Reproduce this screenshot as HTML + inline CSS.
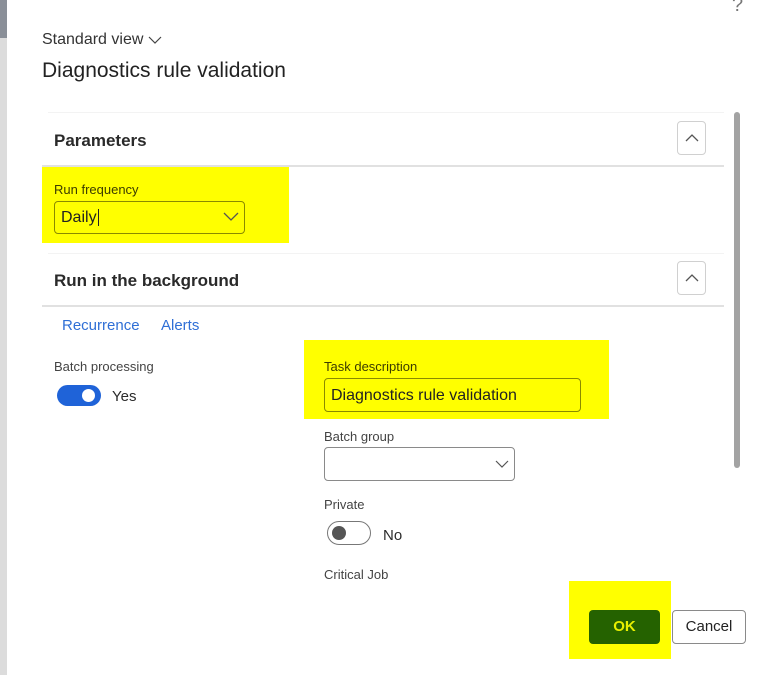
<!DOCTYPE html>
<html><head><meta charset="utf-8"><style>
*{margin:0;padding:0;box-sizing:border-box}
body{width:768px;height:675px;background:#fff;position:relative;overflow:hidden;font-family:"Liberation Sans",sans-serif;color:#2b2b2b}
.a{position:absolute;white-space:nowrap}
.lbl{font-size:13px;color:#444}
.y{background:#ffff00;position:absolute}
.btn{position:absolute;border:1px solid #d0d0d0;border-radius:4px;background:#fff}
.line{position:absolute;height:2px;background:#e1e1e1}
</style></head><body>
<div class="a" style="left:0;top:0;width:7px;height:675px;background:#dcdcdc"></div>
<div class="a" style="left:0;top:0;width:7px;height:38px;background:#8a8f98"></div>
<div class="a" style="left:732px;top:-6px;font-size:20px;color:#777">?</div>

<div class="a" style="left:42px;top:31px;font-size:16px;color:#333">Standard view</div>
<svg class="a" style="left:148px;top:35px" width="14" height="10"><path d="M1 2 L7 8 L13 2" fill="none" stroke="#444" stroke-width="1.2"/></svg>
<div class="a" style="left:42px;top:59px;font-size:21px;color:#222">Diagnostics rule validation</div>

<div class="a" style="left:48px;top:112px;width:676px;height:1px;background:#f3f3f3"></div>
<div class="a" style="left:54px;top:131px;font-size:17px;font-weight:bold;color:#2a2a2a">Parameters</div>
<div class="btn" style="left:677px;top:121px;width:29px;height:34px"></div>
<svg class="a" style="left:684px;top:133px" width="16" height="10"><path d="M2 8 L8 2 L14 8" fill="none" stroke="#555" stroke-width="1.3"/></svg>
<div class="line" style="left:42px;top:165px;width:682px"></div>

<div class="y" style="left:42px;top:167px;width:247px;height:76px"></div>
<div class="a lbl" style="left:54px;top:182px;color:#3c3c00">Run frequency</div>
<div class="a" style="left:54px;top:201px;width:191px;height:33px;border:1px solid #8a8a00;border-radius:4px"></div>
<div class="a" style="left:61px;top:209px;font-size:16px;color:#222">Daily<span style="border-left:1px solid #222;margin-left:1px"></span></div>
<svg class="a" style="left:223px;top:212px" width="16" height="10"><path d="M1 1 L8 8 L15 1" fill="none" stroke="#555" stroke-width="1.3"/></svg>

<div class="a" style="left:48px;top:253px;width:676px;height:1px;background:#f3f3f3"></div>
<div class="a" style="left:54px;top:271px;font-size:17px;font-weight:bold;color:#2a2a2a">Run in the background</div>
<div class="btn" style="left:677px;top:261px;width:29px;height:34px"></div>
<svg class="a" style="left:684px;top:273px" width="16" height="10"><path d="M2 8 L8 2 L14 8" fill="none" stroke="#555" stroke-width="1.3"/></svg>
<div class="line" style="left:42px;top:305px;width:682px"></div>

<div class="a" style="left:62px;top:317px;font-size:15px;color:#2f6fd6">Recurrence</div>
<div class="a" style="left:161px;top:317px;font-size:15px;color:#2f6fd6">Alerts</div>

<div class="a lbl" style="left:54px;top:359px">Batch processing</div>
<div class="a" style="left:57px;top:385px;width:44px;height:21px;border-radius:11px;background:#1f63d8"></div>
<div class="a" style="left:82px;top:389px;width:13px;height:13px;border-radius:50%;background:#fff"></div>
<div class="a" style="left:112px;top:388px;font-size:15px">Yes</div>

<div class="y" style="left:304px;top:340px;width:305px;height:79px"></div>
<div class="a lbl" style="left:324px;top:359px;color:#3c3c00">Task description</div>
<div class="a" style="left:324px;top:378px;width:257px;height:34px;border:1px solid #8a8a00;border-radius:4px"></div>
<div class="a" style="left:331px;top:387px;font-size:16px;color:#222">Diagnostics rule validation</div>

<div class="a lbl" style="left:324px;top:429px">Batch group</div>
<div class="a" style="left:324px;top:447px;width:191px;height:34px;border:1px solid #8a8a8a;border-radius:4px"></div>
<svg class="a" style="left:495px;top:460px" width="14" height="9"><path d="M1 1 L7 7 L13 1" fill="none" stroke="#555" stroke-width="1.2"/></svg>

<div class="a lbl" style="left:324px;top:497px">Private</div>
<div class="a" style="left:327px;top:521px;width:44px;height:24px;border-radius:12px;border:1px solid #777"></div>
<div class="a" style="left:332px;top:526px;width:14px;height:14px;border-radius:50%;background:#555"></div>
<div class="a" style="left:383px;top:527px;font-size:15px">No</div>

<div class="a lbl" style="left:324px;top:567px">Critical Job</div>

<div class="a" style="left:734px;top:112px;width:6px;height:356px;border-radius:3px;background:#a3a3a3"></div>

<div class="y" style="left:569px;top:581px;width:102px;height:78px"></div>
<div class="a" style="left:589px;top:610px;width:71px;height:34px;border-radius:4px;background:#256200;color:#e8f000;font-size:15px;font-weight:bold;text-align:center;line-height:34px">OK</div>
<div class="a" style="left:672px;top:610px;width:74px;height:34px;border-radius:4px;border:1px solid #8a8a8a;font-size:15px;text-align:center;line-height:32px;color:#222">Cancel</div>
</body></html>
